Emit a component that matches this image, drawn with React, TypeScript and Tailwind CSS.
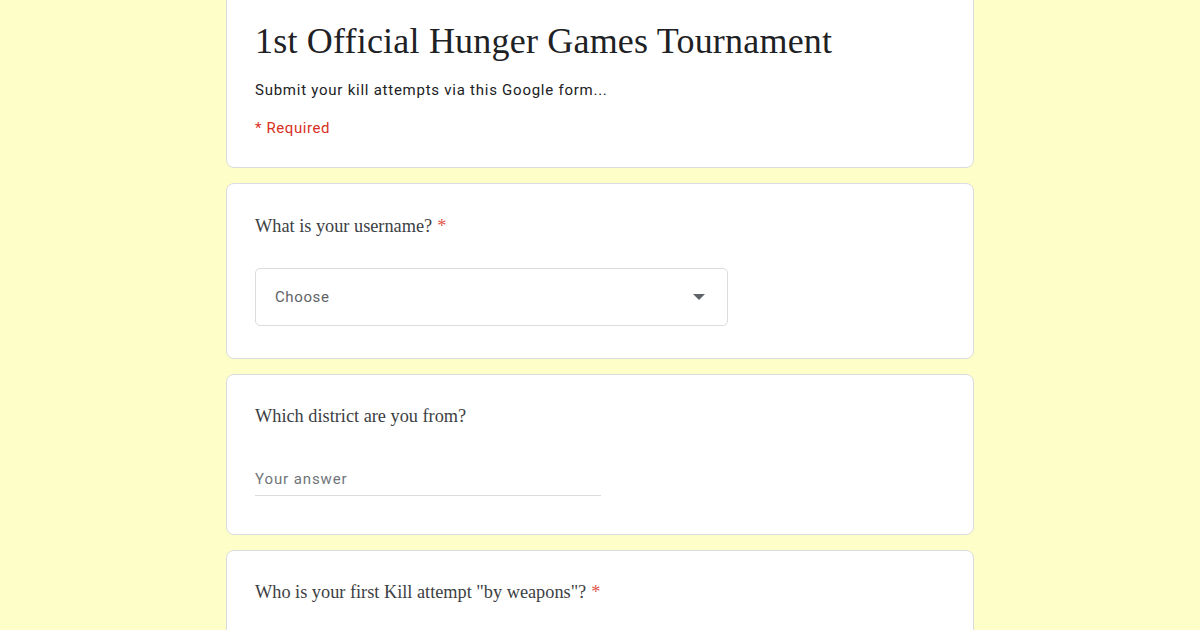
import React from "react";

const serif = { fontFamily: '"Liberation Serif", "DejaVu Serif", serif' };

function Star() {
  return <span className="text-[#e0554a] ml-[5px]">*</span>;
}

export default function App() {
  return (
    <div className="min-h-[630px] w-full bg-[#fefec8] overflow-hidden font-['Roboto',sans-serif]">
      <div className="mx-auto w-[748px] flex flex-col gap-[15px] -mt-[20px]">
        <div className="bg-white border border-[#dadce0] rounded-lg px-[28px] pt-[36px] pb-[27px]">
          <h1 className="text-[36px] leading-[48px] text-[#202124] tracking-[0.2px]" style={serif}>
            1st Official Hunger Games Tournament
          </h1>
          <p className="mt-[13px] text-[15px] leading-[24px] text-[#202124] tracking-[0.75px]">
            Submit your kill attempts via this Google form...
          </p>
          <p className="mt-[14px] text-[15px] leading-[24px] text-[#d93025] tracking-[0.6px]">* Required</p>
        </div>

        <div className="bg-white border border-[#dadce0] rounded-lg px-[28px] pt-[30px] pb-[32px]">
          <div className="text-[18.3px] leading-[24px] text-[#3c4043]" style={serif}>
            What is your username?<Star />
          </div>
          <div className="mt-[30px] w-[473px] h-[58px] border border-[#dadce0] rounded-[5px] flex items-center justify-between pl-[19px] pr-[22px]">
            <span className="text-[15px] text-[#5f6368] tracking-[0.6px]">Choose</span>
            <svg width="12" height="6" viewBox="0 0 12 6">
              <path d="M0 0 L12 0 L6 6 Z" fill="#5f6368" />
            </svg>
          </div>
        </div>

        <div className="bg-white border border-[#dadce0] rounded-lg px-[28px] pt-[29px] pb-[38px]">
          <div className="text-[18.3px] leading-[24px] text-[#3c4043]" style={serif}>
            Which district are you from?
          </div>
          <div className="mt-[39px] w-[346px] border-b border-[#dadce0] pb-[4px]">
            <span className="text-[15px] leading-[20px] text-[#70757a] tracking-[0.9px]">Your answer</span>
          </div>
        </div>

        <div className="bg-white border border-[#dadce0] rounded-lg px-[28px] pt-[29px] pb-[40px] h-[120px]">
          <div className="text-[18.3px] leading-[24px] text-[#3c4043]" style={serif}>
            Who is your first Kill attempt "by weapons"?<Star />
          </div>
        </div>
      </div>
    </div>
  );
}
